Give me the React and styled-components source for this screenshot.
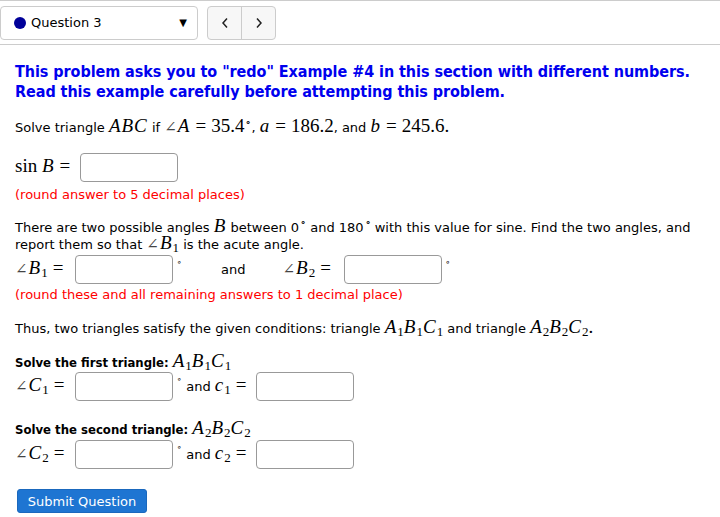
import React from 'react';
import styled, { createGlobalStyle } from 'styled-components';

const
    GlobalStyle = createGlobalStyle`
        body {
            margin: 0;
            background: #fff;
            font-family: "DejaVu Sans", Verdana, sans-serif;
            font-size: 13px;
            line-height: 17px;
            color: #000;
        }
    `,
    TopBar = styled.div`
        display: flex;
        align-items: center;
        gap: 9px;
        height: 43px;
        border-top: 1px solid #ccc;
        border-bottom: 1px solid #ccc;
    `,
    QuestionSelect = styled.div`
        display: flex;
        align-items: center;
        width: 198px;
        height: 34px;
        box-sizing: border-box;
        border: 1px solid #ccc;
        border-radius: 4px;
        padding: 0 10px 0 13px;
        background: #fff;
    `,
    Dot = styled.span`
        width: 12px;
        height: 12px;
        border-radius: 50%;
        background: #000099;
        margin-right: 5px;
    `,
    SelectLabel = styled.span`
        flex: 1;
    `,
    Caret = styled.span`
        font-size: 10px;
    `,
    NavGroup = styled.div`
        display: flex;
        height: 34px;
        box-sizing: border-box;
        border: 1px solid #ccc;
        border-radius: 4px;
        background: #f7f7f7;
        overflow: hidden;
    `,
    NavButton = styled.div`
        width: 33px;
        display: flex;
        align-items: center;
        justify-content: center;
        border-left: ${ p => p.first ? 'none' : '1px solid #ccc' };
    `,
    Content = styled.div`
        padding: 0 15px;
    `,
    Intro = styled.div`
        margin-top: 17px;
        color: #0000ee;
        font-family: "DejaVu Sans Condensed", "DejaVu Sans", sans-serif;
        font-weight: bold;
        font-size: 16px;
        line-height: 20px;
        letter-spacing: -0.06px;
    `,
    Para = styled.div`
        margin-top: ${ p => p.top || 0 }px;
    `,
    Row = styled.div`
        display: flex;
        align-items: center;
        margin-top: ${ p => p.top || 0 }px;
    `,
    Label = styled.span`
        display: inline-block;
    `,
    Note = styled.div`
        color: #f00;
        margin-top: ${ p => p.top || 0 }px;
    `,
    Heading = styled.div`
        font-family: "DejaVu Sans Condensed", "DejaVu Sans", sans-serif;
        font-weight: bold;
        margin-top: ${ p => p.top || 0 }px;
    `,
    M = styled.span`
        font-family: "Liberation Serif", "DejaVu Serif", serif;
        font-weight: normal;
        font-size: 19px;
        line-height: 0;
        white-space: nowrap;
    `,
    V = styled.i`
        font-style: italic;
        letter-spacing: 1px;
    `,
    Sub = styled.span`
        font-size: 13px;
        font-style: normal;
        vertical-align: -3px;
    `,
    Deg = styled.sup`
        font-family: "Liberation Serif", serif;
        font-size: 10px;
        line-height: 0;
        vertical-align: 7px;
        margin-left: 1px;
    `,
    Eq = styled.span`
        margin: 0 5px;
    `,
    Ang = styled.span`
        font-family: "DejaVu Serif", serif;
        font-size: 15px;
        color: #444;
        margin-right: 1px;
    `,
    Box = styled.div`
        width: 98px;
        height: 29px;
        box-sizing: border-box;
        border: 1px solid #999;
        border-radius: 4px;
        margin-left: ${ p => p.left || 0 }px;
    `,
    Degree = styled.span`
        align-self: flex-start;
        font-size: 9px;
        line-height: 9px;
        margin: 3px 0 0 3px;
    `,
    Spacer = styled.span`
        width: ${ p => p.w }px;
    `,
    SubmitButton = styled.button`
        margin: 20px 0 0 2px;
        font-family: "DejaVu Sans", sans-serif;
        font-size: 13px;
        color: #fff;
        background: #1e75d2;
        border: 1px solid #1a68bd;
        border-radius: 3px;
        height: 24px;
        width: 130px;
        padding: 0;
    `
;

const Angle = ( { v, n } ) => (
    <><Ang>∠</Ang><V>{ v }</V><Sub>{ n }</Sub></>
);

const Tri = ( { n } ) => (
    <M><V>A</V><Sub>{ n }</Sub><V>B</V><Sub>{ n }</Sub><V>C</V><Sub>{ n }</Sub></M>
);

const App = () => (
    <>
        <GlobalStyle />
        <TopBar>
            <QuestionSelect>
                <Dot />
                <SelectLabel>Question 3</SelectLabel>
                <Caret>▼</Caret>
            </QuestionSelect>
            <NavGroup>
                <NavButton first>
                    <svg width="8" height="12" viewBox="0 0 8 12"><path d="M6 1.5 L2 6 L6 10.5" fill="none" stroke="#222" strokeWidth="1.5" /></svg>
                </NavButton>
                <NavButton>
                    <svg width="8" height="12" viewBox="0 0 8 12"><path d="M2 1.5 L6 6 L2 10.5" fill="none" stroke="#222" strokeWidth="1.5" /></svg>
                </NavButton>
            </NavGroup>
        </TopBar>
        <Content>
            <Intro>
                This problem asks you to "redo" Example #4 in this section with different numbers.
                Read this example carefully before attempting this problem.
            </Intro>
            <Para top={ 17 }>
                Solve triangle <M><V>ABC</V></M> if <M><Ang>∠</Ang><V>A</V><Eq>=</Eq>35.4<Deg>∘</Deg></M>, <M><V>a</V><Eq>=</Eq>186.2</M>, and <M><V>b</V><Eq>=</Eq>245.6.</M>
            </Para>
            <Row top={ 17 }>
                <Label><M>sin <V>B</V><Eq>=</Eq></M></Label>
                <Box left={ 5 } />
            </Row>
            <Note top={ 4 }>(round answer to 5 decimal places)</Note>
            <Para top={ 16 }>
                There are two possible angles <M><V>B</V></M> between 0<Deg>∘</Deg> and 180<Deg>∘</Deg> with this value for sine. Find the two angles, and
                report them so that <M><Angle v="B" n="1" /></M> is the acute angle.
            </Para>
            <Row top={ 2 }>
                <Label><M><Angle v="B" n="1" /><Eq>=</Eq></M></Label>
                <Box left={ 7 } />
                <Degree>∘</Degree>
                <Spacer w={ 39 } />
                <span>and</span>
                <Spacer w={ 37 } />
                <Label><M><Angle v="B" n="2" /><Eq>=</Eq></M></Label>
                <Box left={ 8 } />
                <Degree>∘</Degree>
            </Row>
            <Note top={ 2 }>(round these and all remaining answers to 1 decimal place)</Note>
            <Para top={ 17 }>
                Thus, two triangles satisfy the given conditions: triangle <Tri n="1" /> and triangle <Tri n="2" /><M>.</M>
            </Para>
            <Heading top={ 17 }>Solve the first triangle: <Tri n="1" /></Heading>
            <Row top={ 1 }>
                <Label><M><Angle v="C" n="1" /><Eq>=</Eq></M></Label>
                <Box left={ 6 } />
                <Degree>∘</Degree>
                <span>&nbsp;and&nbsp;</span>
                <Label><M><V>c</V><Sub>1</Sub><Eq>=</Eq></M></Label>
                <Box left={ 4 } />
            </Row>
            <Heading top={ 20 }>Solve the second triangle: <Tri n="2" /></Heading>
            <Row top={ 2 }>
                <Label><M><Angle v="C" n="2" /><Eq>=</Eq></M></Label>
                <Box left={ 6 } />
                <Degree>∘</Degree>
                <span>&nbsp;and&nbsp;</span>
                <Label><M><V>c</V><Sub>2</Sub><Eq>=</Eq></M></Label>
                <Box left={ 4 } />
            </Row>
            <SubmitButton>Submit Question</SubmitButton>
        </Content>
    </>
);

export default App;
